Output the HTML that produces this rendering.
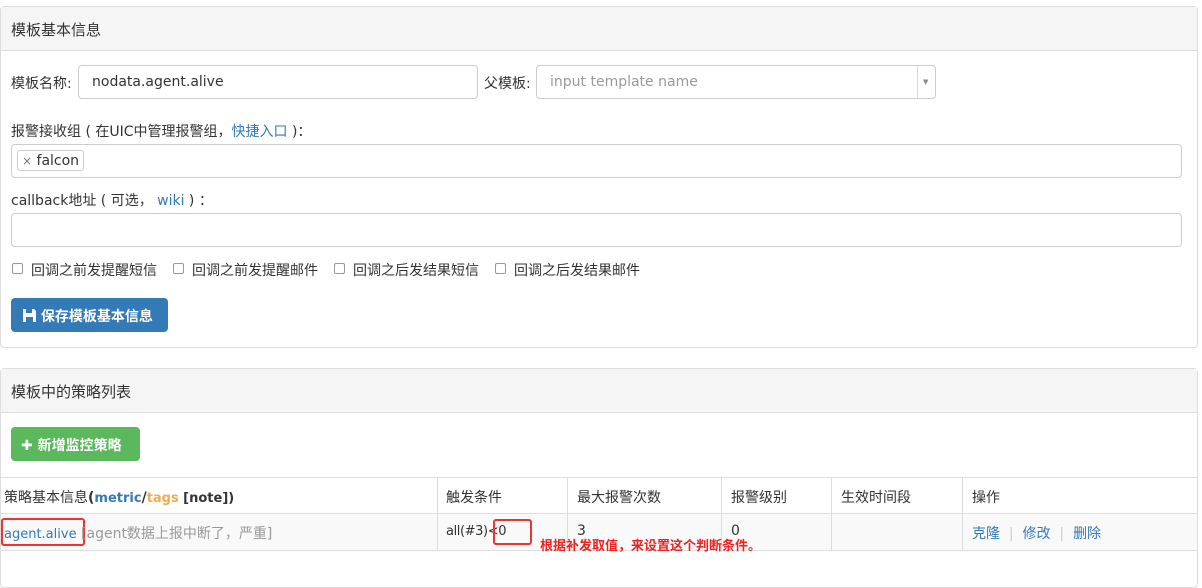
<!DOCTYPE html>
<html><head><meta charset="utf-8"><style>
*{box-sizing:border-box;margin:0;padding:0}
body{width:1202px;height:559px;background:#fff;font-family:"DejaVu Sans","Noto Sans CJK SC",sans-serif;font-size:14px;color:#333;position:relative;overflow:hidden}
.a{position:absolute;white-space:nowrap}
.l{font-size:13px}
.panel{position:absolute;left:0;width:1198px;border:1px solid #ddd;border-radius:4px;background:#fff}
.ph{position:absolute;left:0;right:0;top:0;height:44px;background:#f5f5f5;border-bottom:1px solid #ddd;padding:12px 10px;font-size:15px}
.inp{position:absolute;border:1px solid #ccc;border-radius:4px;background:#fff}
.blue{color:#337ab7}
.cb{position:absolute;width:11px;height:11px;border:1px solid #999;border-radius:2px;background:#fff}
.btn{position:absolute;border-radius:4px;color:#fff;font-weight:bold;font-size:14px;padding:8px 10px}
.vl{position:absolute;width:1px;background:#ddd}
.hl{position:absolute;height:1px;background:#ddd}
</style></head><body>
<div class="panel" style="top:6px;height:342px">
<div class="ph">模板基本信息</div>
</div>
<div class="a" style="left:11px;top:73px">模板名称:</div>
<div class="inp" style="left:78px;top:65px;width:400px;height:34px"></div>
<div class="a" style="left:92px;top:74px">nodata.agent.alive</div>
<div class="a" style="left:484px;top:73px">父模板:</div>
<div class="inp" style="left:536px;top:65px;width:400px;height:34px"></div>
<div class="vl" style="left:917px;top:66px;height:32px"></div>
<div class="a" style="left:923px;top:78px;font-size:7px;color:#888">▼</div>
<div class="a" style="left:550px;top:74px;color:#999">input template name</div>
<div class="a" style="left:11px;top:121px">报警接收组 ( 在UIC中管理报警组，<span class="blue">快捷入口</span> )：</div>
<div class="inp" style="left:11px;top:144px;width:1171px;height:34px"></div>
<div class="a" style="left:17px;top:150px;border:1px solid #ccc;border-radius:3px;padding:1px 4px;height:21px;line-height:18px"><span style="color:#777;font-size:12px">×</span> falcon</div>
<div class="a" style="left:11px;top:190px">callback地址 ( 可选， <span class="blue">wiki</span> ) ：</div>
<div class="inp" style="left:11px;top:213px;width:1171px;height:34px"></div>
<div class="cb" style="left:12px;top:263px"></div><div class="a" style="left:31px;top:260px">回调之前发提醒短信</div>
<div class="cb" style="left:173px;top:263px"></div><div class="a" style="left:192px;top:260px">回调之前发提醒邮件</div>
<div class="cb" style="left:334px;top:263px"></div><div class="a" style="left:353px;top:260px">回调之后发结果短信</div>
<div class="cb" style="left:495px;top:263px"></div><div class="a" style="left:514px;top:260px">回调之后发结果邮件</div>
<div class="btn" style="left:11px;top:298px;width:157px;height:34px;background:#337ab7;padding-left:12px"><svg width="13" height="13" viewBox="0 0 13 13" style="vertical-align:-1px"><path d="M0 0H11L13 2V13H0Z M3 0V4H9V0 M3 8H10V13H3Z" fill="#fff" fill-rule="evenodd"/></svg> 保存模板基本信息</div>

<div class="panel" style="top:368px;height:220px">
<div class="ph">模板中的策略列表</div>
</div>
<div class="btn" style="left:11px;top:427px;width:129px;height:34px;background:#5cb85c">✚ 新增监控策略</div>
<div class="hl" style="left:0;top:477px;width:1198px"></div>
<div class="hl" style="left:0;top:513px;width:1198px"></div>
<div style="position:absolute;left:1px;top:514px;width:1196px;height:36px;background:#f9f9f9"></div>
<div class="hl" style="left:0;top:550px;width:1198px"></div>
<div class="vl" style="left:437px;top:477px;height:73px"></div>
<div class="vl" style="left:567px;top:477px;height:73px"></div>
<div class="vl" style="left:721px;top:477px;height:73px"></div>
<div class="vl" style="left:831px;top:477px;height:73px"></div>
<div class="vl" style="left:962px;top:477px;height:73px"></div>
<div class="a" style="left:4px;top:487px">策略基本信息<b>(</b><b class="blue l">metric</b><b>/</b><b class="l" style="color:#f0ad4e">tags</b> <b class="l">[note])</b></div>
<div class="a" style="left:446px;top:487px">触发条件</div>
<div class="a" style="left:577px;top:487px">最大报警次数</div>
<div class="a" style="left:731px;top:487px">报警级别</div>
<div class="a" style="left:841px;top:487px">生效时间段</div>
<div class="a" style="left:972px;top:487px">操作</div>
<div class="a" style="left:1px;top:518px;border:2px solid #e33;border-radius:3px;width:84px;height:28px"></div>
<div class="a" style="left:4px;top:523px" ><span class="blue l">agent.alive</span> <span style="color:#999">[agent数据上报中断了，严重]</span></div>
<div class="a l" style="left:446px;top:524px;letter-spacing:-0.4px">all(#3)&lt;0</div>
<div class="a" style="left:493px;top:519px;border:2px solid #e33;border-radius:3px;width:39px;height:26px"></div>
<div class="a" style="left:577px;top:523px">3</div>
<div class="a" style="left:731px;top:523px">0</div>
<div class="a" style="left:540px;top:535px;color:#e22;font-size:13px;font-weight:bold">根据补发取值，来设置这个判断条件。</div>
<div class="a" style="left:972px;top:523px"><span class="blue">克隆</span> <span style="color:#ccc">&nbsp;|&nbsp;</span> <span class="blue">修改</span> <span style="color:#ccc">&nbsp;|&nbsp;</span> <span class="blue">删除</span></div>
</body></html>
